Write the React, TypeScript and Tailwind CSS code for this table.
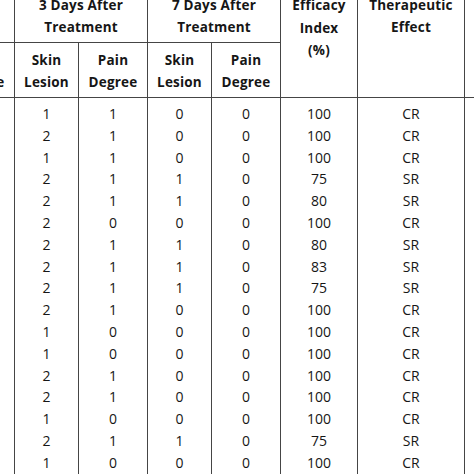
const rows: [string, string, string, string, string, string][] = [
  ["1", "1", "0", "0", "100", "CR"],
  ["2", "1", "0", "0", "100", "CR"],
  ["1", "1", "0", "0", "100", "CR"],
  ["2", "1", "1", "0", "75", "SR"],
  ["2", "1", "1", "0", "80", "SR"],
  ["2", "0", "0", "0", "100", "CR"],
  ["2", "1", "1", "0", "80", "SR"],
  ["2", "1", "1", "0", "83", "SR"],
  ["2", "1", "1", "0", "75", "SR"],
  ["2", "1", "0", "0", "100", "CR"],
  ["1", "0", "0", "0", "100", "CR"],
  ["1", "0", "0", "0", "100", "CR"],
  ["2", "1", "0", "0", "100", "CR"],
  ["2", "1", "0", "0", "100", "CR"],
  ["1", "0", "0", "0", "100", "CR"],
  ["2", "1", "1", "0", "75", "SR"],
  ["1", "0", "0", "0", "100", "CR"],
];

const cols = "grid grid-cols-[64px_69px_64px_69px_64px_69px_77px_107px_80px]";
const line = "border-[#454545]";

export default function App() {
  return (
    <div
      className="w-[474px] h-[474px] overflow-hidden bg-white text-[#161616]"
      style={{ fontFamily: "'Open Sans', Lato, sans-serif" }}
    >
      <div className="-ml-[118px] -mt-[17px] w-[700px]">
        {/* header */}
        <div className={`${cols} grid-rows-[60px_55px] text-[13.5px] font-bold text-center leading-[22px] tracking-[0.2px]`}>
          <div className={`col-span-2 border-r border-b ${line} pt-[11px]`}>
            Before
            <br />
            Treatment
          </div>
          <div className={`col-span-2 border-r border-b ${line} pt-[11px]`}>
            3 Days After
            <br />
            Treatment
          </div>
          <div className={`col-span-2 border-r border-b ${line} pt-[11px]`}>
            7 Days After
            <br />
            Treatment
          </div>
          <div className={`row-span-2 border-r border-b ${line} pt-[11px] leading-[22.5px]`}>
            Efficacy
            <br />
            Index
            <br />
            (%)
          </div>
          <div className={`row-span-2 border-r border-b ${line} pt-[11px]`}>
            Therapeutic
            <br />
            Effect
          </div>
          <div className={`row-span-2 border-b ${line}`} />
          {["Skin|Lesion", "Pain|Degree", "Skin|Lesion", "Pain|Degree", "Skin|Lesion", "Pain|Degree"].map((h, i) => (
            <div key={i} className={`border-r border-b ${line} pt-[6px]`}>
              {h.split("|")[0]}
              <br />
              {h.split("|")[1]}
            </div>
          ))}
        </div>

        {/* body */}
        {rows.map((r, i) => (
          <div key={i} className={`${cols} text-[14px] text-center leading-[21.8px]`}>
            {[r[0] === "1" ? "2" : "3", r[0], ...r].map((v, j) => (
              <div key={j} className={`${j < 8 ? `border-r ${line}` : ""} ${i === 0 ? "pt-[5px]" : ""}`}>
                {j < 8 ? v : ""}
              </div>
            ))}
          </div>
        ))}
      </div>
    </div>
  );
}
